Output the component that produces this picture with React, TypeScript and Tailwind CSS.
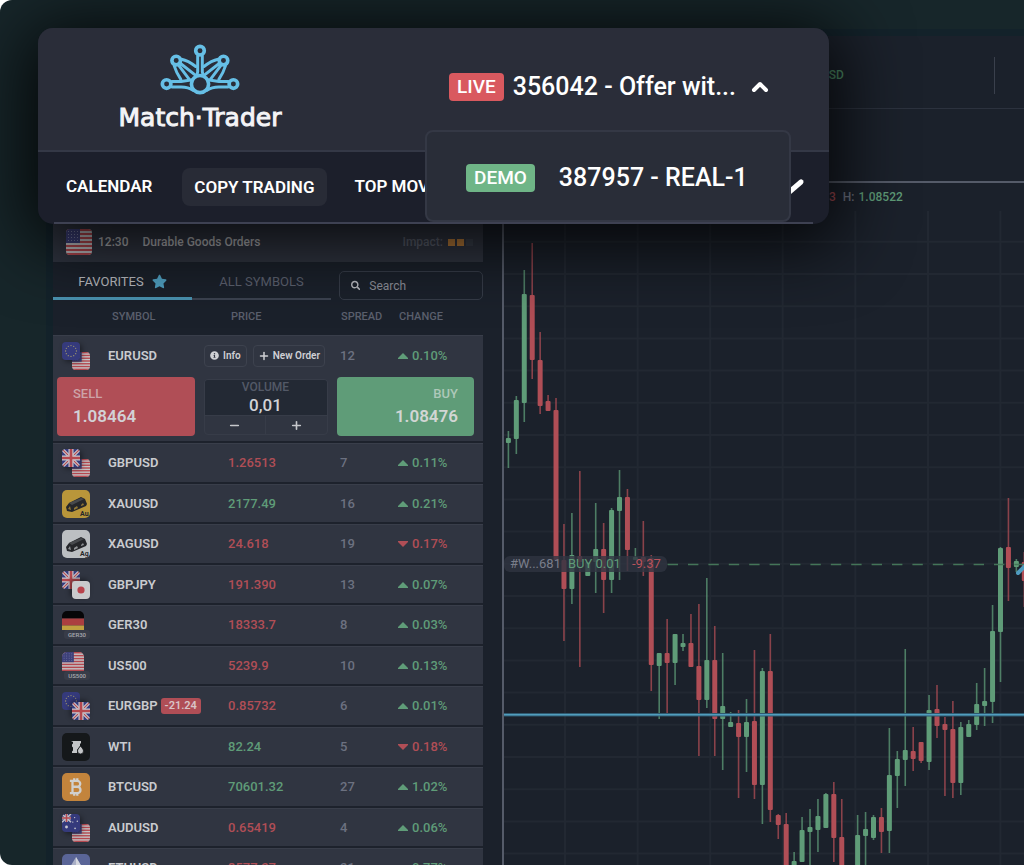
import type { ReactNode } from "react";
import { ChevronUp, Minus, Plus } from "lucide-react";
import { FaInfoCircle, FaSearch, FaStar } from "react-icons/fa";

type Candle = ["g" | "r", number, number, number, number, number];

// colour, slot, high, low, body top, body bottom
const candles: Candle[] = [
  ["g", 0, 431, 468, 438, 443], ["g", 1, 396, 454, 400, 439], ["g", 2, 270, 422, 294, 403],
  ["r", 3, 243, 379, 295, 360], ["r", 4, 332, 414, 360, 406], ["r", 5, 395, 411, 401, 411],
  ["r", 6, 398, 560, 410, 560], ["r", 7, 524, 641, 560, 589], ["g", 8, 513, 604, 555, 589],
  ["r", 9, 471, 667, 556, 562], ["g", 10, 562, 576, 562, 576], ["g", 11, 503, 593, 549, 562],
  ["r", 12, 523, 613, 549, 580], ["g", 13, 508, 593, 510, 580], ["g", 14, 470, 580, 497, 511],
  ["r", 15, 489, 571, 497, 550], ["g", 16, 548, 560, 557, 560], ["r", 17, 521, 576, 557, 562],
  ["r", 18, 555, 691, 558, 665], ["g", 19, 653, 719, 653, 666], ["r", 20, 619, 714, 653, 663],
  ["g", 21, 634, 685, 634, 663], ["g", 22, 634, 651, 643, 647], ["r", 23, 614, 667, 643, 667],
  ["r", 24, 604, 756, 666, 700], ["g", 25, 578, 708, 660, 700], ["r", 26, 626, 756, 660, 719],
  ["g", 27, 653, 770, 706, 719], ["g", 28, 712, 727, 722, 727], ["r", 29, 710, 798, 723, 737],
  ["g", 30, 699, 772, 722, 737], ["r", 31, 650, 799, 721, 785], ["g", 32, 668, 824, 671, 785],
  ["r", 33, 634, 822, 671, 810], ["r", 34, 814, 839, 815, 825], ["r", 35, 813, 880, 824, 880],
  ["g", 36, 852, 880, 861, 880], ["g", 37, 817, 862, 830, 862], ["g", 38, 809, 880, 827, 832],
  ["g", 39, 799, 852, 816, 830], ["g", 40, 793, 828, 794, 828], ["r", 41, 782, 862, 794, 838],
  ["r", 42, 799, 880, 837, 880], ["g", 44, 815, 880, 835, 880], ["g", 45, 812, 880, 829, 836],
  ["g", 46, 815, 840, 817, 838], ["r", 47, 808, 853, 817, 832], ["g", 48, 728, 853, 775, 831],
  ["g", 49, 751, 808, 759, 776], ["g", 50, 649, 786, 750, 760], ["r", 51, 727, 771, 751, 759],
  ["r", 52, 742, 763, 742, 761], ["g", 53, 695, 770, 710, 762], ["r", 54, 685, 738, 709, 726],
  ["r", 55, 717, 796, 724, 730], ["r", 56, 701, 798, 729, 783], ["g", 57, 722, 795, 727, 783],
  ["g", 58, 720, 737, 724, 737], ["g", 59, 683, 730, 704, 725], ["g", 60, 668, 726, 701, 706],
  ["g", 61, 605, 723, 631, 702], ["g", 62, 547, 682, 548, 632], ["r", 63, 498, 601, 547, 568],
  ["g", 64, 559, 572, 561, 567], ["r", 65, 552, 607, 562, 581],
];

function Chart() {
  return (
    <svg width="522" height="655" viewBox="504 211 522 655" role="img" aria-label="Price chart" className="block">
      <g stroke="#222832" strokeWidth="2">
        {[565, 637.7, 710.2, 782.7, 855.3, 928, 1000.4].map((x) => (
          <line key={x} x1={x} x2={x} y1="210" y2="866" />
        ))}
        {Array.from({ length: 21 }, (_, i) => 209.6 + i * 32.2).map((y) => (
          <line key={y} x1="502" x2="1026" y1={y} y2={y} />
        ))}
      </g>
      {candles.map(([c, k, hi, lo, top, bottom]) => {
        const x = 508.4 + k * 7.937;
        const fill = c === "g" ? "#5f9c78" : "#b04e56";
        return (
          <g key={k} fill={fill}>
            <rect x={x - 0.8} y={hi} width="1.6" height={lo - hi} opacity="0.75" />
            <rect x={x - 2.5} y={top} width="5" height={bottom - top} rx="1" />
          </g>
        );
      })}
      <line x1="667.6" x2="1026" y1="564.5" y2="564.5" stroke="#447558" strokeWidth="1.4" strokeDasharray="10.4 10" />
      <line x1="502" x2="1026" y1="714.8" y2="714.8" stroke="#2f596f" strokeWidth="3.4" />
      <line x1="502" x2="1026" y1="714.8" y2="714.8" stroke="#519dbd" strokeWidth="1.6" />
      <path d="M1018 573l8-8" stroke="#4f9cc0" strokeWidth="4" strokeLinecap="round" />
    </svg>
  );
}

function UsFlag({ className = "" }: { className?: string }) {
  return (
    <svg viewBox="0 0 26 26" preserveAspectRatio="none" className={className} aria-hidden="true">
      <rect width="26" height="26" fill="#c3c3c6" />
      {[0, 4, 8, 12, 16, 20, 24].map((y) => (
        <rect key={y} y={y} width="26" height="2" fill="#b5484f" />
      ))}
      <rect width="14" height="14" fill="#3d407a" />
      <g fill="#7f82a8">
        {[2, 5, 8, 11].map((x) => [2, 5, 8, 11].map((y) => <rect key={`${x}-${y}`} x={x} y={y} width="1" height="1" />))}
      </g>
    </svg>
  );
}

function UkFlag({ className = "" }: { className?: string }) {
  return (
    <svg viewBox="0 0 20 20" className={className} aria-hidden="true">
      <rect width="20" height="20" fill="#353b7d" />
      <path d="M0 0l20 20M20 0L0 20" stroke="#c9c9cf" strokeWidth="3.6" />
      <path d="M0 0l20 20M20 0L0 20" stroke="#b5484f" strokeWidth="1.2" />
      <path d="M10 0v20M0 10h20" stroke="#c9c9cf" strokeWidth="5.6" />
      <path d="M10 0v20M0 10h20" stroke="#b5484f" strokeWidth="3" />
    </svg>
  );
}

function EuFlag({ className = "" }: { className?: string }) {
  return (
    <svg viewBox="0 0 20 20" className={className} aria-hidden="true">
      <rect width="20" height="20" fill="#353a7c" />
      {Array.from({ length: 12 }, (_, i) => (
        <circle key={i} cx={10 + 6 * Math.sin((i * Math.PI) / 6)} cy={10 + 6 * Math.cos((i * Math.PI) / 6)} r="0.7" fill="#a09a6c" />
      ))}
    </svg>
  );
}

function AuFlag({ className = "" }: { className?: string }) {
  return (
    <svg viewBox="0 0 20 20" className={className} aria-hidden="true">
      <rect width="20" height="20" fill="#353a7c" />
      <path d="M0 0l10 9M10 0L0 9" stroke="#c0c0c8" strokeWidth="1.6" />
      <path d="M5 0v9M0 4.500h10" stroke="#c0c0c8" strokeWidth="3" />
      <path d="M5 0v9M0 4.500h10" stroke="#b5484f" strokeWidth="1.6" />
      <g fill="#c9c9cf">
        <circle cx="5" cy="14.500" r="1.600" />
        <circle cx="14" cy="4" r="0.800" />
        <circle cx="17" cy="8" r="0.800" />
        <circle cx="12" cy="9" r="0.800" />
        <circle cx="14.500" cy="16" r="0.900" />
      </g>
    </svg>
  );
}

function JpFlag({ className = "" }: { className?: string }) {
  return (
    <svg viewBox="0 0 20 20" className={className} aria-hidden="true">
      <rect width="20" height="20" fill="#c9cacc" />
      <circle cx="10" cy="10" r="4" fill="#b8434c" />
    </svg>
  );
}

function Pair({ base, quote }: { base: ReactNode; quote: ReactNode }) {
  return (
    <div className="relative size-[28px]">
      <div className="absolute right-0 bottom-0 size-[18px] overflow-hidden rounded-[4px]">{quote}</div>
      <div className="absolute top-0 left-0 size-[18px] overflow-hidden rounded-[4px] shadow-[2px_2px_5px_rgba(0,0,0,0.4)]">{base}</div>
    </div>
  );
}

function QuoteTopPair({ base, quote }: { base: ReactNode; quote: ReactNode }) {
  return (
    <div className="relative size-[28px]">
      <div className="absolute top-0 left-0 size-[18px] overflow-hidden rounded-[4px]">{base}</div>
      <div className="absolute right-0 bottom-0 size-[18px] overflow-hidden rounded-[4px] shadow-[-2px_-2px_5px_rgba(0,0,0,0.4)]">{quote}</div>
    </div>
  );
}

function Bar({ label, tone }: { label: string; tone: string }) {
  return (
    <svg viewBox="0 0 28 28" className="block size-[28px] rounded-[5px]" aria-hidden="true">
      <rect width="28" height="28" fill={tone} />
      <path d="M4 17l3-4 12-6 4 2 2 5-1 2-14 6-5-1z" fill="#25262a" />
      <path d="M7 13l12-5 3 1-12 6z" fill="#47494d" />
      <path d="M6 19l2-3 1 4zM12 18l3-2 1 2-4 2zM19 15l2-2 1 2-3 1z" fill={tone} opacity="0.7" />
      <text x="18" y="25.500" fontSize="7" fontWeight="700" fontFamily="Roboto, sans-serif" fill="#25262a">{label}</text>
    </svg>
  );
}

function IndexIcon({ label, children }: { label: string; children: ReactNode }) {
  return (
    <div className="relative size-[28px]">
      <div className="h-[19px] w-[22px] overflow-hidden rounded-t-[5px]">{children}</div>
      <div className="absolute right-0 bottom-0 rounded-[3px] bg-[#383c48] px-1 text-[6px] leading-[9px] font-medium text-[#a9abb1]">{label}</div>
    </div>
  );
}

const germanFlag = (
  <svg viewBox="0 0 22 19" className="block" aria-hidden="true">
    <rect width="22" height="7.500" fill="#060607" />
    <rect y="7.500" width="22" height="7" fill="#ab3f40" />
    <rect y="14.500" width="22" height="4.500" fill="#c0a040" />
  </svg>
);

const oilIcon = (
  <svg viewBox="0 0 28 28" className="block size-[28px] rounded-[5px]" aria-hidden="true">
    <rect width="28" height="28" fill="#15181a" />
    <path d="M9 8h10v2l-1 1v2l-3 4v3h-5v-1.500l1-1v-3l-1-1v-2l1-1v-1.500l-2-1z" fill="#c4c6c8" />
    <path d="M18.500 13c2 2.500 3 3.500 3 5a3 3 0 0 1-6 0c0-1.500 1-2.500 3-5z" fill="#c4c6c8" stroke="#15181a" strokeWidth="0.800" />
  </svg>
);

const bitcoinIcon = (
  <div className="grid size-[28px] place-items-center rounded-[5px] bg-[#c3843c]">
    <svg viewBox="0 0 16 20" className="h-[18px] w-[14px]" aria-hidden="true">
      <path d="M4 3v14M1 3h8.500a3.300 3.300 0 0 1 0 6.700H4M9.500 9.700a3.600 3.600 0 0 1 0 7.300H1M6 0v3M9.500 0v3M6 17v3M9.500 17v3" fill="none" stroke="#d0d0cf" strokeWidth="2.600" />
    </svg>
  </div>
);

const etherIcon = (
  <svg viewBox="0 0 28 28" className="block size-[28px] rounded-[5px]" aria-hidden="true">
    <rect width="28" height="28" fill="#5a6597" />
    <path d="M14 3l6.500 11-6.500 4-6.500-4z" fill="#a9afc6" />
    <path d="M14 3l6.500 11-6.500-2z" fill="#d4d6de" />
    <path d="M14 20l6.500-4L14 25l-6.500-9z" fill="#c2c5d2" />
  </svg>
);

const usd = <UsFlag className="block size-full" />;
const gbp = <UkFlag className="block size-full" />;
const eur = <EuFlag className="block size-full" />;

interface Quote {
  symbol: string;
  price: string;
  down?: boolean;
  spread: string;
  change: string;
  falling?: boolean;
  profit?: string;
  icon: ReactNode;
}

const quotes: Quote[] = [
  { symbol: "GBPUSD", price: "1.26513", down: true, spread: "7", change: "0.11%", icon: <Pair base={gbp} quote={usd} /> },
  { symbol: "XAUUSD", price: "2177.49", spread: "16", change: "0.21%", icon: <Bar label="Au" tone="#b9963a" /> },
  { symbol: "XAGUSD", price: "24.618", down: true, spread: "19", change: "0.17%", falling: true, icon: <Bar label="Ag" tone="#bcbfc2" /> },
  { symbol: "GBPJPY", price: "191.390", down: true, spread: "13", change: "0.07%", icon: <QuoteTopPair base={gbp} quote={<JpFlag className="block size-full" />} /> },
  { symbol: "GER30", price: "18333.7", down: true, spread: "8", change: "0.03%", icon: <IndexIcon label="GER30">{germanFlag}</IndexIcon> },
  { symbol: "US500", price: "5239.9", down: true, spread: "10", change: "0.13%", icon: <IndexIcon label="US500">{usd}</IndexIcon> },
  { symbol: "EURGBP", price: "0.85732", down: true, spread: "6", change: "0.01%", profit: "-21.24", icon: <QuoteTopPair base={eur} quote={gbp} /> },
  { symbol: "WTI", price: "82.24", spread: "5", change: "0.18%", falling: true, icon: oilIcon },
  { symbol: "BTCUSD", price: "70601.32", spread: "27", change: "1.02%", icon: bitcoinIcon },
  { symbol: "AUDUSD", price: "0.65419", down: true, spread: "4", change: "0.06%", icon: <Pair base={<AuFlag className="block size-full" />} quote={usd} /> },
  { symbol: "ETHUSD", price: "3577.27", down: true, spread: "21", change: "0.77%", icon: etherIcon },
];

function Change({ value, falling = false }: { value: string; falling?: boolean }) {
  return (
    <span className={`flex items-center gap-1 ${falling ? "text-[#b04e56]" : "text-[#5f9c78]"}`}>
      <svg viewBox="0 0 10 6" className={`h-[6px] w-[10px] ${falling ? "rotate-180" : ""}`} aria-hidden="true">
        <path d="M5 0l5 5v1H0V5z" fill="currentColor" />
      </svg>
      {value}
    </span>
  );
}

function Ticket() {
  return (
    <div className="flex items-stretch gap-[9px] pr-[9px] pl-1">
      <button className="h-[59px] flex-1 rounded-[4px] bg-[#b04e56] px-4 text-left">
        <span className="block text-[13px] leading-[18px] text-[#cda3a8]">SELL</span>
        <span className="block text-[17px] leading-[26px] font-semibold text-[#d2d2d6]">1.08464</span>
      </button>
      <div className="mt-[2px] mb-px flex w-[124px] flex-col overflow-hidden rounded-[4px] border border-[#373c48]">
        <label className="flex flex-1 flex-col items-center bg-[#232934] text-[12px] leading-[15px] text-[#535967]">
          VOLUME
          <input defaultValue="0,01" className="w-full bg-transparent text-center text-[17px] leading-[20px] font-medium text-[#d2d3d6] outline-none" />
        </label>
        <div className="flex h-[19px] border-t border-[#373c48] text-[#c6c8cc]">
          <button aria-label="Decrease volume" className="grid flex-1 place-items-center border-r border-[#373c48]"><Minus size={13} strokeWidth={3} /></button>
          <button aria-label="Increase volume" className="grid flex-1 place-items-center"><Plus size={13} strokeWidth={3} /></button>
        </div>
      </div>
      <button className="h-[59px] flex-1 rounded-[4px] bg-[#5f9c78] px-4 text-right">
        <span className="block text-[13px] leading-[18px] text-[#adc8b9]">BUY</span>
        <span className="block text-[17px] leading-[26px] font-semibold text-[#d2d6d4]">1.08476</span>
      </button>
    </div>
  );
}

function SymbolTable() {
  return (
    <table className="w-full table-fixed border-separate border-spacing-0 text-left text-[13px] font-medium">
      <colgroup>
        <col className="w-[55px]" />
        <col className="w-[96px]" />
        <col />
        <col className="w-[58px]" />
        <col className="w-[85px]" />
      </colgroup>
      <thead>
        <tr className="h-[35px] text-[11px] text-[#5b606e]">
          <th />
          <th className="pl-1 font-medium">SYMBOL</th>
          <th className="pl-[27px] font-medium">PRICE</th>
          <th className="pl-px font-medium">SPREAD</th>
          <th className="pl-px font-medium">CHANGE</th>
        </tr>
      </thead>
      <tbody className="[&_td]:bg-[#303541]">
        <tr className="h-[40px] [&>td]:border-t [&>td]:border-[#393e4a]">
          <td className="pl-[9px]"><Pair base={eur} quote={usd} /></td>
          <td className="font-semibold text-[#c9cbcf]">EURUSD</td>
          <td>
            <div className="flex gap-[6px] text-[10px] font-semibold whitespace-nowrap text-[#cfd0d4]">
              <button className="flex h-[22px] items-center gap-1 rounded-[4px] border border-[#3d424e] px-[5px]"><FaInfoCircle size={9} />Info</button>
              <button className="flex h-[22px] items-center gap-[3px] rounded-[4px] border border-[#3d424e] px-1"><Plus size={12} strokeWidth={3} />New Order</button>
            </div>
          </td>
          <td className="text-[#6c7180]">12</td>
          <td><Change value="0.10%" /></td>
        </tr>
        <tr>
          <td colSpan={5} className="border-b-2 border-[#1d222c] pt-[2px] pb-[5px]"><Ticket /></td>
        </tr>
      </tbody>
      <tbody>
        {quotes.map((q) => (
          <tr key={q.symbol} className="odd:h-[41px] even:h-[40px] [&>td]:border-t [&>td]:border-b-2 [&>td]:border-t-[#393e4a] [&>td]:border-b-[#1d222c] [&>td]:bg-[#303541]">
            <td className="pl-[9px]">{q.icon}</td>
            <td className="font-semibold text-[#c9cbcf]">
              <div className="flex items-center gap-[3px]">
                {q.symbol}
                {q.profit && <span className="rounded-[3px] bg-[#b04e56] px-1 text-[11px] leading-4 text-[#d9c4c7]">{q.profit}</span>}
              </div>
            </td>
            <td className={`pl-6 ${q.down ? "text-[#b04e56]" : "text-[#5f9c78]"}`}>{q.price}</td>
            <td className="text-[#6c7180]">{q.spread}</td>
            <td><Change value={q.change} falling={q.falling} /></td>
          </tr>
        ))}
      </tbody>
    </table>
  );
}

function Watchlist() {
  return (
    <section className="w-[430px] shrink-0 pt-[113px]">
      <div className="flex h-[40px] items-center bg-[#303541] pr-[10px] pl-[13px] text-[12px] font-medium">
        <UsFlag className="size-[26px] rounded-[4px]" />
        <span className="ml-[6px] text-[#b0b1b5]">12:30</span>
        <span className="ml-[14px] text-[#b0b1b5]">Durable Goods Orders</span>
        <span className="ml-auto text-[#5b606e]">Impact:</span>
        <span className="ml-[5px] flex gap-[2px]">
          <i className="size-[7px] bg-[#b97c3a]" />
          <i className="size-[7px] bg-[#b97c3a]" />
          <i className="size-[7px] bg-[#3a404c]" />
        </span>
      </div>
      <div className="flex h-[38px] items-end gap-2">
        <div className="flex flex-1 text-[13px]">
          <button className="flex h-[34px] flex-1 items-center justify-center gap-2 border-b-[3px] border-[#4a92b0] text-[#b8babf]">FAVORITES<FaStar size={15} className="text-[#4f9fc0]" /></button>
          <button className="flex h-[34px] flex-1 items-center justify-center border-b-2 border-[#3c4250] text-[#5b606e]">ALL SYMBOLS</button>
        </div>
        <label className="flex h-[29px] w-[144px] items-center gap-[9px] rounded-[5px] border border-[#363c48] px-[11px] text-[#b8babf]">
          <FaSearch size={11} />
          <input aria-label="Search" placeholder="Search" className="w-full bg-transparent text-[12px] outline-none placeholder:text-[#8b8e97]" />
        </label>
      </div>
      <SymbolTable />
    </section>
  );
}

function Logo() {
  return (
    <div className="flex w-[170px] flex-col items-center">
      <svg viewBox="477 134 242 154" className="h-[51px] w-[80px]" fill="none" stroke="#66bfe6" strokeWidth="11" strokeLinecap="round" aria-hidden="true">
        <circle cx="598" cy="154" r="13" />
        <circle cx="526" cy="184" r="13" />
        <circle cx="669" cy="184" r="13" />
        <circle cx="497" cy="255" r="13" />
        <circle cx="699" cy="255" r="13" />
        <circle cx="598" cy="255" r="26" />
        <path d="M591 170v48q0 8-6 14M605 170v48q0 8 6 14" strokeWidth="9" />
        <path d="M542 180q20 4 43 22M538 192l46 36M533 198l32 42M520 200q6 20 20 41" strokeWidth="9" />
        <path d="M653 180q-20 4-43 22M657 192l-46 36M662 198l-32 42M675 200q-6 20-20 41" strokeWidth="9" />
        <path d="M513 247h28l34-5M513 264h28q22 0 36 10M683 247h-28l-34-5M683 264h-28q-22 0-36 10" strokeWidth="9" />
      </svg>
      <span className="mt-[9px] font-['DejaVu_Sans'] text-[25px] leading-[28px] whitespace-nowrap text-[#f4f4f6] [-webkit-text-stroke:1px_#f4f4f6]">Match·Trader</span>
    </div>
  );
}

function AccountCard() {
  return (
    <div className="absolute top-[28px] left-[38px] w-[791px] rounded-[15px] bg-[#1c1f2b] text-white shadow-[0_10px_70px_10px_rgba(0,0,0,0.85)]">
      <div className="flex h-[124px] rounded-t-[15px] border-b-2 border-[#343846] bg-[#2a2d39] pt-4 pr-[57px] pl-[77px]">
        <Logo />
        <button className="ml-auto flex h-[86px] items-center text-[25px] font-medium">
          <span className="rounded-[4px] bg-[#d9595f] px-2 text-[19px] leading-[28px]">LIVE</span>
          <span className="ml-[9px]">356042 - Offer wit...</span>
          <ChevronUp size={24} strokeWidth={4} className="ml-3" />
        </button>
      </div>
      <nav className="flex h-[70px] items-center text-[17px] font-semibold">
        <a href="#calendar" className="ml-7">CALENDAR</a>
        <a href="#copy" className="ml-[30px] rounded-[8px] bg-[#282b36] px-3 leading-[38px]">COPY TRADING</a>
        <a href="#movers" className="ml-7">TOP MOVERS</a>
        <button aria-label="Edit" className="mr-[24px] ml-auto">
          <svg width="22" height="22" viewBox="0 0 22 22" aria-hidden="true">
            <path d="M4 18L18 6" stroke="#fff" strokeWidth="5" strokeLinecap="round" />
          </svg>
        </button>
      </nav>
      <div className="mx-4 h-[2px] bg-[#3e4152]" />
      <div className="absolute top-[102px] right-[38px] flex h-[92px] w-[366px] items-center rounded-[8px] border-2 border-[#343845] bg-[#292d38] pt-[3px] pl-[39px] text-[25px] font-medium">
        <span className="rounded-[4px] bg-[#6fb587] px-2 text-[19px] leading-[28px]">DEMO</span>
        <span className="ml-6">387957 - REAL-1</span>
      </div>
    </div>
  );
}

export default function App() {
  return (
    <div className="h-screen overflow-hidden bg-white font-[Roboto,sans-serif]">
      <div className="relative h-full overflow-hidden rounded-l-[12px] bg-[#17262a] pt-[36px] pl-[53px]">
        <div className="flex h-full flex-col bg-[#1b212b] ring-[7px] ring-[#13222a]">
          <header className="flex h-[73px] shrink-0 items-center border-b border-[#2c323e] pt-[6px] text-[12px]">
            <span className="ml-[768px] font-medium text-[#4f8f68]">USD</span>
            <span className="mr-[29px] ml-auto h-[37px] w-px bg-[#3a404c]" />
          </header>
          <div className="flex min-h-0 flex-1">
            <Watchlist />
            <main className="ml-[19px] flex min-w-0 flex-1 flex-col">
              <div className="h-[72px] shrink-0" />
              <div className="relative flex-1 overflow-hidden border-t-2 border-l-2 border-[#555b69]">
                <div className="flex h-[28px] items-center gap-[7px] pl-[325px] text-[12px] font-medium">
                  <span className="text-[#a44a52]">3</span>
                  <span className="flex gap-1 text-[#6c7180]">H: <b className="font-medium text-[#5f9c78]">1.08522</b></span>
                </div>
                <Chart />
                <div className="absolute top-[373px] left-0 flex h-[16px] items-center gap-[7px] rounded-[6px] bg-[#303541]/80 px-[6px] text-[13px] whitespace-nowrap">
                  <span className="text-[#7a7e8b]">#W...681</span>
                  <span className="text-[#5f9c78]">BUY 0.01</span>
                  <span className="ml-1 text-[#b9535b]">-9.37</span>
                </div>
              </div>
            </main>
          </div>
        </div>
        <AccountCard />
      </div>
    </div>
  );
}
